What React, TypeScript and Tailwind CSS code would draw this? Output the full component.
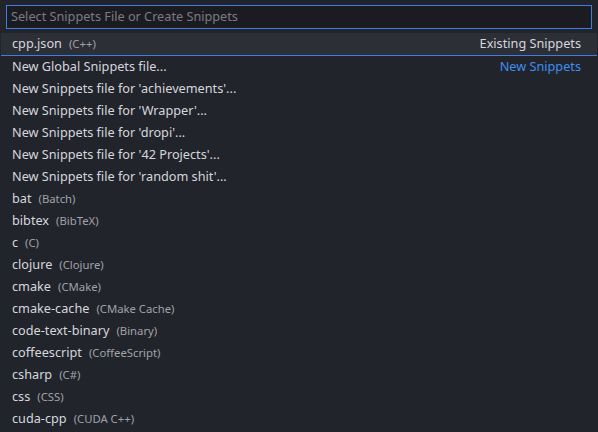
import React from 'react'

type Item = { label: string; detail?: string; right?: string; rightBlue?: boolean }

const items: Item[] = [
  { label: 'cpp.json', detail: '(C++)', right: 'Existing Snippets' },
  { label: 'New Global Snippets file...', right: 'New Snippets', rightBlue: true },
  { label: "New Snippets file for 'achievements'..." },
  { label: "New Snippets file for 'Wrapper'..." },
  { label: "New Snippets file for 'dropi'..." },
  { label: "New Snippets file for '42 Projects'..." },
  { label: "New Snippets file for 'random shit'..." },
  { label: 'bat', detail: '(Batch)' },
  { label: 'bibtex', detail: '(BibTeX)' },
  { label: 'c', detail: '(C)' },
  { label: 'clojure', detail: '(Clojure)' },
  { label: 'cmake', detail: '(CMake)' },
  { label: 'cmake-cache', detail: '(CMake Cache)' },
  { label: 'code-text-binary', detail: '(Binary)' },
  { label: 'coffeescript', detail: '(CoffeeScript)' },
  { label: 'csharp', detail: '(C#)' },
  { label: 'css', detail: '(CSS)' },
  { label: 'cuda-cpp', detail: '(CUDA C++)' },
]

export default function App() {
  return (
    <div
      className="w-[598px] h-[432px] overflow-hidden bg-[#22242c] text-[12.7px] text-[#d5d7dc]"
      style={{ fontFamily: '"Noto Sans", "Open Sans", sans-serif' }}
    >
      <div className="px-[6px] pt-[5px] pb-[4px]">
        <div className="h-[24px] border border-[#3d7ee0] bg-[#1b1c21] flex items-center px-[4px]">
          <span className="text-[#7a7c83]">Select Snippets File or Create Snippets</span>
        </div>
      </div>
      <div className="flex flex-col">
        {items.map((it, i) => (
          <div
            key={i}
            className={
              i === 0
                ? 'h-[23px] flex items-center px-[11px] mx-[1px] bg-[#2d2f37] border-b border-[#3d7ee0]'
                : 'h-[22px] flex items-center px-[11px] mx-[1px]'
            }
          >
            <span className="whitespace-nowrap">{it.label}</span>
            {it.detail && (
              <span className="ml-[7px] text-[11.3px] text-[#a0a2a8] whitespace-nowrap">{it.detail}</span>
            )}
            {it.right && (
              <span
                className={
                  it.rightBlue
                    ? 'ml-auto pr-[5px] text-[#3d8ff0]'
                    : 'ml-auto pr-[5px] text-[#d5d7dc]'
                }
              >
                {it.right}
              </span>
            )}
          </div>
        ))}
      </div>
    </div>
  )
}
